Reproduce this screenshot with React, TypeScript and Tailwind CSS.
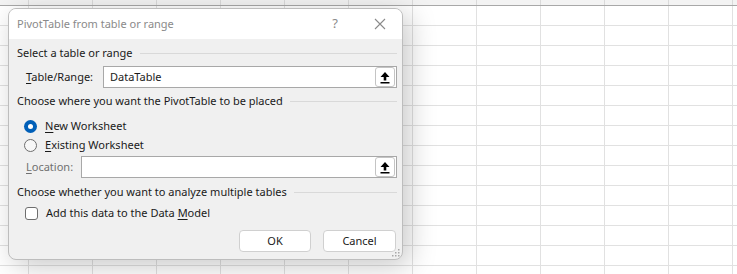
import React from "react";

const FONT = "font-['Noto_Sans','Liberation_Sans',sans-serif]";

const cols = [29, 64, 64, 64, 64, 64, 64, 64, 64, 64, 64, 64];
const rows = Array.from({ length: 14 });

const UploadButton = () => (
  <div className="w-[20px] h-[20px] bg-white border border-[#c4c4c4] rounded-[3px] flex items-center justify-center">
    <svg width="12" height="13" viewBox="0 0 12 13">
      <path d="M6 1 L10.5 6 L7.3 6 L7.3 9.5 L4.7 9.5 L4.7 6 L1.5 6 Z" fill="#000" />
      <rect x="1.5" y="11" width="9" height="1.5" fill="#000" />
    </svg>
  </div>
);

const SectionHeader = ({ text }: { text: string }) => (
  <div className="h-[18px] flex items-center gap-[7px] pl-[8px] pr-[5px]">
    <span className="text-[#1a1a1a] whitespace-nowrap">{text}</span>
    <div className="flex-1 h-px bg-[#d9d9d9]" />
  </div>
);

export default function App() {
  return (
    <div className={`relative w-[737px] h-[274px] overflow-hidden bg-white ${FONT} text-[11px]`}>
      {/* sheet grid */}
      <div className="flex flex-col">
        <div className="h-[6px] flex bg-[#f3f3f3] border-b border-[#a8a8a8]">
          {cols.map((w, i) => (
            <div key={i} style={{ width: w }} className="shrink-0 border-r border-[#dadada]" />
          ))}
        </div>
        {rows.map((_, r) => (
          <div key={r} className="h-[20px] flex border-b border-[#e1e1e1]">
            {cols.map((w, i) => (
              <div key={i} style={{ width: w }} className="shrink-0 border-r border-[#e1e1e1]" />
            ))}
          </div>
        ))}
      </div>

      {/* dialog */}
      <div className="absolute left-[8px] top-[8px] w-[395px] h-[252px] rounded-[8px] border border-[#bdbdbd] bg-[#f0f0f0] shadow-[6px_6px_28px_rgba(0,0,0,0.22)] flex flex-col overflow-hidden">
        <div className="h-[30px] bg-white flex items-center pl-[8px] shrink-0">
          <span className="text-[#8a8a8a]">PivotTable from table or range</span>
          <div className="flex-1" />
          <span className="text-[#8a8a8a] text-[13px] w-[20px] text-center mr-[29px]">?</span>
          <svg width="12" height="12" viewBox="0 0 12 12" className="mr-[16px]">
            <path d="M1 1 L11 11 M11 1 L1 11" stroke="#8a8a8a" strokeWidth="1.1" />
          </svg>
        </div>

        <div className="flex flex-col">
          <div className="mt-[5px]">
            <SectionHeader text="Select a table or range" />
          </div>

          <div className="mt-[4px] h-[22px] flex items-center pl-[17px] pr-[5px]">
            <span className="w-[77px] text-[#1a1a1a]">
              <u className="underline-offset-2">T</u>able/Range:
            </span>
            <div className="flex-1 h-[22px] bg-white border border-[#a8a8a8] flex items-center pl-[6px] pr-px">
              <span className="flex-1 text-[#1a1a1a]">DataTable</span>
              <UploadButton />
            </div>
          </div>

          <div className="mt-[4px]">
            <SectionHeader text="Choose where you want the PivotTable to be placed" />
          </div>

          <div className="mt-[7px] h-[19px] flex items-center pl-[15px] gap-[8px]">
            <div className="w-[13px] h-[13px] rounded-full bg-[#005fb8] flex items-center justify-center">
              <div className="w-[5px] h-[5px] rounded-full bg-white" />
            </div>
            <span className="text-[#1a1a1a]">
              <u className="underline-offset-2">N</u>ew Worksheet
            </span>
          </div>

          <div className="h-[19px] flex items-center pl-[15px] gap-[8px]">
            <div className="w-[13px] h-[13px] rounded-full border border-[#6e6e6e] bg-[#f7f7f7]" />
            <span className="text-[#1a1a1a]">
              <u className="underline-offset-2">E</u>xisting Worksheet
            </span>
          </div>

          <div className="mt-[1px] h-[22px] flex items-center pl-[17px] pr-[5px]">
            <span className="w-[55px] text-[#707070]">
              <u className="underline-offset-2">L</u>ocation:
            </span>
            <div className="flex-1 h-[22px] bg-white border border-[#a8a8a8] flex items-center justify-end pr-px">
              <UploadButton />
            </div>
          </div>

          <div className="mt-[5px]">
            <SectionHeader text="Choose whether you want to analyze multiple tables" />
          </div>

          <div className="mt-[3px] h-[18px] flex items-center pl-[16px] gap-[8px]">
            <div className="w-[13px] h-[13px] rounded-[3px] border border-[#6e6e6e] bg-white" />
            <span className="text-[#1a1a1a]">
              Add this data to the Data <u className="underline-offset-2">M</u>odel
            </span>
          </div>

          <div className="mt-[8px] h-[22px] flex justify-end gap-[12px] pr-[6px]">
            <button className="w-[72px] h-[22px] bg-white border border-[#d0d0d0] rounded-[4px] text-[#1a1a1a]">
              OK
            </button>
            <button className="w-[73px] h-[22px] bg-white border border-[#d0d0d0] rounded-[4px] text-[#1a1a1a]">
              Cancel
            </button>
          </div>
        </div>

        <svg width="8" height="8" viewBox="0 0 8 8" className="absolute right-[2px] bottom-[2px]">
          <rect x="6" y="0" width="1.5" height="1.5" fill="#a8a8a8" />
          <rect x="3" y="3" width="1.5" height="1.5" fill="#a8a8a8" />
          <rect x="6" y="3" width="1.5" height="1.5" fill="#a8a8a8" />
          <rect x="0" y="6" width="1.5" height="1.5" fill="#a8a8a8" />
          <rect x="3" y="6" width="1.5" height="1.5" fill="#a8a8a8" />
          <rect x="6" y="6" width="1.5" height="1.5" fill="#a8a8a8" />
        </svg>
      </div>
    </div>
  );
}
